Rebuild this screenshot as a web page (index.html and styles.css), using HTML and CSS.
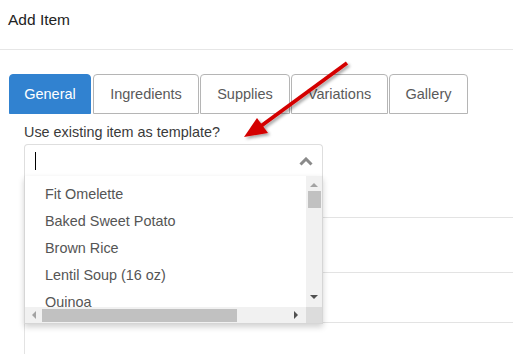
FILE: index.html
```html
<!DOCTYPE html>
<html>
<head>
<meta charset="utf-8">
<link rel="stylesheet" href="styles.css">
</head>
<body>
<div class="page">
  <div class="header">Add Item</div>
  <div class="content">
    <ul class="tabs">
      <li class="tab active">General</li>
      <li class="tab">Ingredients</li>
      <li class="tab">Supplies</li>
      <li class="tab">Variations</li>
      <li class="tab">Gallery</li>
    </ul>
    <div class="form">
      <div class="label">Use existing item as template?</div>
      <div class="select-wrap">
        <div class="select">
          <span class="caret"></span>
          <svg class="chevron" width="14" height="9" viewBox="0 0 14 9"><polyline points="1.5,7.5 7,2 12.5,7.5" fill="none" stroke="#8a8a8a" stroke-width="3"/></svg>
        </div>
        <div class="dropdown">
          <div class="viewport">
            <ul class="options">
              <li>Fit Omelette</li>
              <li>Baked Sweet Potato</li>
              <li>Brown Rice</li>
              <li>Lentil Soup (16 oz)</li>
              <li>Quinoa</li>
            </ul>
          </div>
          <div class="vscroll">
            <span class="arr up"></span>
            <span class="vthumb"></span>
            <span class="arr down"></span>
          </div>
          <div class="hscroll">
            <span class="arr left"></span>
            <span class="hthumb"></span>
            <span class="arr right"></span>
          </div>
          <div class="corner"></div>
        </div>
      </div>
      <div class="rows">
        <div class="row r1"></div>
        <div class="row r2"></div>
        <div class="row r3"></div>
        <div class="box"></div>
      </div>
    </div>
  </div>
  <svg class="pointer" width="513" height="354" viewBox="0 0 513 354">
    <defs>
      <filter id="sh" x="-20%" y="-20%" width="140%" height="140%">
        <feDropShadow dx="2" dy="2" stdDeviation="1.5" flood-color="#000" flood-opacity="0.35"/>
      </filter>
    </defs>
    <g filter="url(#sh)" fill="#d40000">
      <line x1="347" y1="63" x2="261" y2="126" stroke="#d40000" stroke-width="3.8" stroke-linecap="butt"/>
      <polygon points="244,137 257,118 268,133"/>
    </g>
  </svg>
</div>
</body>
</html>
```
FILE: styles.css
```css
* { box-sizing: border-box; }
html, body { margin: 0; padding: 0; background: #fff; }
body { font-family: "Liberation Sans", Arial, Helvetica, sans-serif; color: #333; }
.page { position: relative; width: 513px; height: 354px; overflow: hidden; }

.header {
  height: 50px;
  padding: 11px 8px 0;
  font-size: 15.5px;
  line-height: 18px;
  color: #222;
  border-bottom: 1px solid #e6e6e6;
}

.content { padding: 24px 0 0 9px; }

.tabs { list-style: none; margin: 0; padding: 0; display: flex; gap: 1px; }
.tab {
  height: 40px;
  line-height: 38px;
  font-size: 14.5px;
  color: #5a5a5a;
  border: 1px solid #b5b5b5;
  border-radius: 4px 4px 0 0;
  background: #fff;
  text-align: center;
}
.tab:nth-child(1) { width: 82px; margin-right: 1px; }
.tab:nth-child(2) { width: 106px; }
.tab:nth-child(3) { width: 90px; }
.tab:nth-child(4) { width: 97px; }
.tab:nth-child(5) { width: 79px; }
.tab.active { background: #3182d0; border-color: #3182d0; color: #fff; }

.form { padding: 10px 0 0 15px; }
.label { font-size: 14.4px; line-height: 16px; color: #3a3a3a; }

.select-wrap { position: relative; margin-top: 4px; width: 299px; z-index: 2; }
.select {
  height: 32px;
  border: 1px solid #dedede;
  border-bottom: none;
  border-radius: 4px 4px 0 0;
  display: flex;
  align-items: center;
  justify-content: space-between;
  padding: 0 9px 0 10px;
}
.caret { width: 1px; height: 18px; background: #000; }
.chevron { display: block; margin-top: 1px; }

.dropdown {
  position: absolute;
  top: 32px;
  left: 0;
  width: 299px;
  height: 148px;
  background: #fff;
  border: 1px solid #d6d6d6;
  border-top: none;
  box-shadow: 0 3px 6px rgba(0,0,0,0.18);
  display: grid;
  grid-template-columns: 1fr 16px;
  grid-template-rows: 1fr 16px;
}
.viewport { overflow: hidden; }
.options { list-style: none; margin: 0; padding: 5px 0 0 20px; }
.options li { height: 27px; line-height: 27px; font-size: 14.4px; color: #555; white-space: nowrap; }

.vscroll { background: #f1f1f1; display: flex; flex-direction: column; align-items: center; position: relative; }
.vthumb { width: 13px; height: 17px; background: #c1c1c1; margin-top: 4px; }
.arr { width: 0; height: 0; border-style: solid; display: block; }
.arr.up { margin-top: 7px; border-width: 0 4px 4px 4px; border-color: transparent transparent #a3a3a3 transparent; }
.arr.down { position: absolute; bottom: 8px; border-width: 4px 4px 0 4px; border-color: #505050 transparent transparent transparent; }

.hscroll { background: #f1f1f1; display: flex; align-items: center; position: relative; }
.hthumb { width: 195px; height: 13px; background: #c1c1c1; margin-left: 6px; }
.arr.left { margin-left: 7px; border-width: 4px 4px 4px 0; border-color: transparent #a3a3a3 transparent transparent; }
.arr.right { position: absolute; right: 8px; border-width: 4px 0 4px 4px; border-color: transparent transparent transparent #505050; }
.corner { background: #dcdcdc; }

.row { border-bottom: 1px solid #e3e3e3; }
.r1 { height: 42px; }
.r2 { height: 55px; }
.r3 { height: 50px; }
.box { height: 40px; border-left: 1px solid #e3e3e3; }

.pointer { position: absolute; left: 0; top: 0; z-index: 5; pointer-events: none; }
```
